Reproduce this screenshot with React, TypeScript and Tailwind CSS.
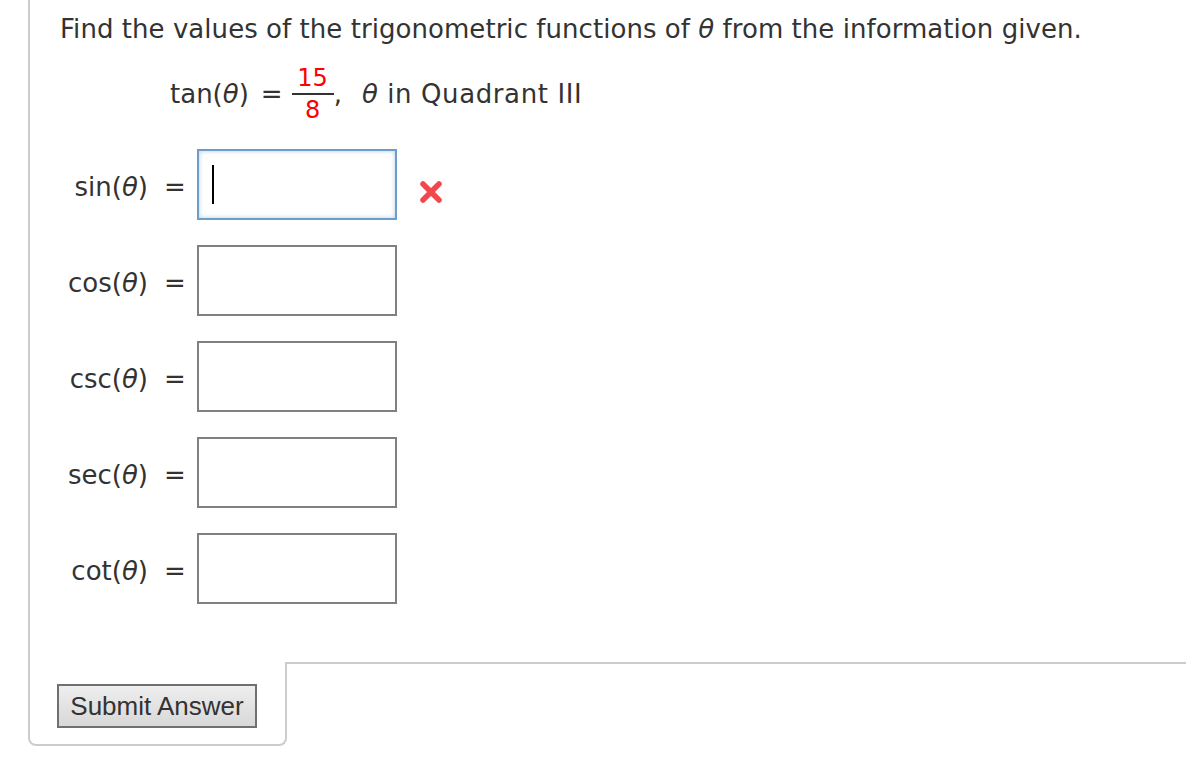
import React from 'react';

const Theta = () => <span className="italic">θ</span>;

const rows = ['sin', 'cos', 'csc', 'sec', 'cot'];

const RedX = () => (
  <svg width="26" height="26" viewBox="0 0 26 26" className="blur-[0.6px]">
    <path d="M5 5L21 21M21 5L5 21" stroke="#f2474d" strokeWidth="5.5" strokeLinecap="round" />
  </svg>
);

export default function App() {
  return (
    <div className="w-[1186px] h-[780px] bg-white text-[#333] font-['DejaVu_Sans',Verdana,sans-serif]">
      <div className="ml-[28px] flex flex-col">
        <div className="border-l-2 border-[#cccccc] h-[662px] pl-[30px] pt-[14px]">
          <p className="text-[26px] leading-[30px] tracking-[0.05px]">
            Find the values of the trigonometric functions of <Theta /> from the information given.
          </p>

          <div className="mt-[20px] ml-[110px] flex items-center h-[60px] text-[26px]">
            <span>
              tan(<Theta />)
            </span>
            <span className="ml-[12px]">=</span>
            <span className="ml-[9px] inline-flex flex-col items-center text-[#ff0000] text-[24px] leading-[24px]">
              <span className="px-[2px]">15</span>
              <span className="h-[2px] w-[42px] bg-[#333] my-[3px]" />
              <span>8</span>
            </span>
            <span>,</span>
            <span className="ml-[20px] tracking-[0.6px]">
              <Theta /> in Quadrant III
            </span>
          </div>

          <div className="mt-[25px] flex flex-col gap-[25px]">
            {rows.map((fn, i) => (
              <div key={fn} className="flex items-center h-[71px]">
                <div className="w-[90px] text-right text-[26px] pr-[2px] whitespace-nowrap flex justify-end mt-[5px]">
                  <span>
                    {fn}(<Theta />)
                  </span>
                </div>
                <span className="ml-[14px] text-[26px] mt-[5px]">=</span>
                {i === 0 ? (
                  <div className="ml-[11px] w-[200px] h-[71px] border-2 border-[#6d9dc8] bg-white shadow-[inset_0_0_4px_rgba(110,160,210,0.55)] flex items-center pl-[13px]">
                    <span className="w-[2px] h-[39px] bg-black" />
                  </div>
                ) : (
                  <div className="ml-[11px] w-[200px] h-[71px] border-2 border-[#808080] bg-white" />
                )}
                {i === 0 && (
                  <span className="ml-[21px] mt-[14px]">
                    <RedX />
                  </span>
                )}
              </div>
            ))}
          </div>
        </div>

        <div className="flex">
          <div className="w-[259px] h-[84px] border-l-2 border-b-2 border-r-2 border-[#cccccc] rounded-b-[8px] pl-[27px] pt-[22px]">
            <button className="w-[200px] h-[44px] border-2 border-[#707070] bg-gradient-to-b from-[#eeeeee] to-[#d8d8d8] text-[26px] text-[#333] font-['Liberation_Sans',Arial,sans-serif] leading-none">
              Submit Answer
            </button>
          </div>
          <div className="flex-1 border-t-2 border-[#cccccc] -ml-[2px]" />
        </div>
      </div>
    </div>
  );
}
